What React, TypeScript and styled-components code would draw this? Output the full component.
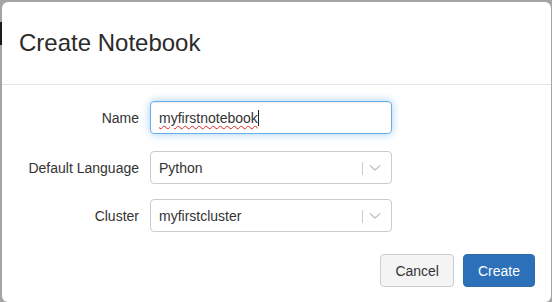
import styled, { createGlobalStyle } from 'styled-components';

const GlobalStyle = createGlobalStyle`
  html, body {
    margin: 0;
    padding: 0;
    width: 552px;
    height: 302px;
    overflow: hidden;
  }
  body {
    font-family: "Liberation Sans", Arial, sans-serif;
    color: #333;
  }
`;

const Backdrop = styled.div`
  width: 552px;
  height: 302px;
  display: flex;
  background-color: #a4a4a4;
  background-image: linear-gradient(
    to bottom,
    #a4a4a4 22px,
    #1a1a1a 22px,
    #1a1a1a 45px,
    #a4a4a4 45px
  );
  background-size: 2px 100%;
  background-repeat: no-repeat;
`;

const Modal = styled.div`
  margin: 2px 1px 0 2px;
  flex: 1;
  height: 300px;
  background: #fff;
  border-radius: 6px;
  display: flex;
  flex-direction: column;
`;

const Header = styled.div`
  padding: 28px 17px 28px;
  border-bottom: 1px solid #e5e5e5;

  h4 {
    margin: 0;
    font-size: 24px;
    font-weight: 400;
    line-height: 1.1;
    color: #2b2b2b;
  }
`;

const Form = styled.div`
  padding: 16px 0 0;
  display: flex;
  flex-direction: column;
  gap: 15px;
`;

const Row = styled.div<{ $spaced?: boolean }>`
  display: grid;
  grid-template-columns: 137px 242px;
  column-gap: 11px;
  align-items: center;
  margin-bottom: ${(p) => (p.$spaced ? '2px' : '0')};

  label {
    text-align: right;
    font-size: 14px;
    color: #333;
  }
`;

const Field = styled.div<{ $focused?: boolean }>`
  height: 33px;
  box-sizing: border-box;
  border: 1px solid ${(p) => (p.$focused ? '#66afe9' : '#ccc')};
  border-radius: 4px;
  display: flex;
  align-items: center;
  padding: 1px 0 0 8px;
  font-size: 14px;
  color: #333;
  box-shadow: ${(p) =>
    p.$focused
      ? 'inset 0 1px 1px rgba(0,0,0,.075), 0 0 8px rgba(102,175,233,.6)'
      : 'none'};
`;

const Spell = styled.span`
  text-decoration: underline wavy #d22;
  text-decoration-thickness: 1px;
  text-underline-offset: 2px;
`;

const Caret = styled.span`
  display: inline-block;
  width: 1px;
  height: 16px;
  background: #222;
`;

const Value = styled.span`
  flex: 1;
`;

const Indicators = styled.div`
  display: flex;
  align-items: center;
  padding-right: 10px;
  gap: 6px;
`;

const Separator = styled.span`
  width: 1px;
  height: 13px;
  background: #ccc;
`;

const Footer = styled.div`
  display: flex;
  justify-content: flex-end;
  gap: 9px;
  padding: 22px 16px 0 0;
`;

const Button = styled.button<{ $primary?: boolean }>`
  height: 33px;
  padding: 0 14px;
  font-family: "Liberation Sans", Arial, sans-serif;
  font-size: 14px;
  border-radius: 4px;
  border: 1px solid ${(p) => (p.$primary ? '#2e6da4' : '#ccc')};
  background: ${(p) => (p.$primary ? '#2b70b8' : '#f4f4f4')};
  color: ${(p) => (p.$primary ? '#fff' : '#333')};
`;

const Chevron = () => (
  <svg width="12" height="8" viewBox="0 0 12 8">
    <path d="M1 1.5 L6 6 L11 1.5" fill="none" stroke="#c6c6c6" strokeWidth="1.6" />
  </svg>
);

const App = () => {
  return (
    <>
      <GlobalStyle />
      <Backdrop>
        <Modal>
          <Header>
            <h4>Create Notebook</h4>
          </Header>
          <Form>
            <Row $spaced>
              <label>Name</label>
              <Field $focused>
                <Spell>myfirstnotebook</Spell>
                <Caret />
              </Field>
            </Row>
            <Row>
              <label>Default Language</label>
              <Field>
                <Value>Python</Value>
                <Indicators>
                  <Separator />
                  <Chevron />
                </Indicators>
              </Field>
            </Row>
            <Row>
              <label>Cluster</label>
              <Field>
                <Value>myfirstcluster</Value>
                <Indicators>
                  <Separator />
                  <Chevron />
                </Indicators>
              </Field>
            </Row>
          </Form>
          <Footer>
            <Button>Cancel</Button>
            <Button $primary>Create</Button>
          </Footer>
        </Modal>
      </Backdrop>
    </>
  );
};

export default App;
